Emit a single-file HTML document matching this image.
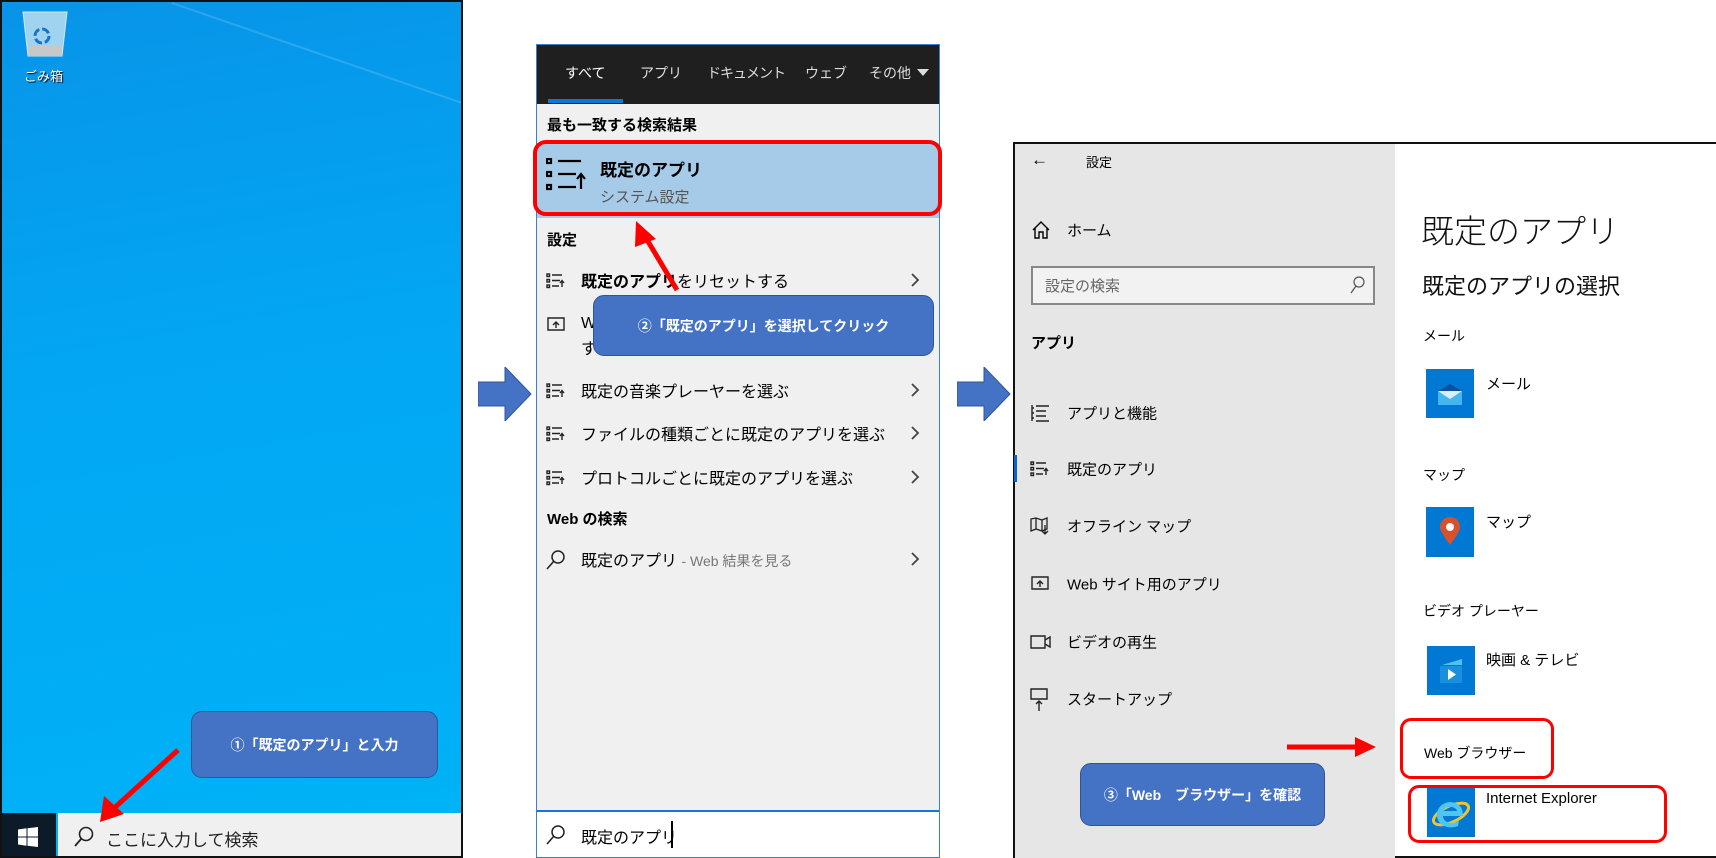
<!DOCTYPE html>
<html><head><meta charset="utf-8"><style>
*{margin:0;padding:0;box-sizing:border-box}
body{width:1716px;height:858px;position:relative;background:#fff;overflow:hidden;font-family:"Liberation Sans","Noto Sans CJK JP",sans-serif;color:#000}
.a{position:absolute;white-space:nowrap}
.call{position:absolute;background:#4472c4;border:1px solid #2f5597;border-radius:11px;color:#fff;font-weight:bold;font-size:14px;display:flex;align-items:center;justify-content:center}
.row{position:absolute;left:581px;font-size:16px;transform:translateY(-50%)}
.chev{position:absolute;left:910px;width:10px;height:16px;transform:translateY(-50%)}
.si{position:absolute;font-size:15px;left:1067px;transform:translateY(-50%);color:#000}
</style></head><body>

<svg width="0" height="0" style="position:absolute"><defs>
<g id="li"><g fill="none" stroke="#222" stroke-width="1.4"><rect x="1" y="1" width="2.5" height="2.5"/><rect x="1" y="6.5" width="2.5" height="2.5"/><rect x="1" y="12" width="2.5" height="2.5"/><path d="M6 2H16M6 7.5H14M6 13H13M16 14V8M14 10L16 7.5L18 10"/></g></g>
<path id="cv" d="M2 2L8 8L2 14" fill="none" stroke="#444" stroke-width="1.8"/>
</defs></svg>

<!-- Desktop -->
<div class="a" style="left:0;top:0;width:463px;height:858px;border:2px solid #111;background:linear-gradient(170deg,#0894e8 0%,#03a6f3 40%,#00b3f7 100%);overflow:hidden">
  <div class="a" style="left:170px;top:0;width:400px;height:2px;background:rgba(255,255,255,.15);transform:rotate(19deg);transform-origin:0 0"></div>
  <svg class="a" style="left:18px;top:4px" width="50" height="54" viewBox="0 0 50 54"><path d="M3 6 L47 6 L42 50 L8 50 Z" fill="#9fd3f0" stroke="#cfe9f7"/><rect x="8" y="40" width="34" height="10" fill="#c8c8c8"/><circle cx="22" cy="30" r="7" fill="none" stroke="#1674c8" stroke-width="3" stroke-dasharray="8 3"/></svg>
  <div class="a" style="left:22px;top:64px;color:#fff;font-size:13px;text-shadow:1px 1px 1px #000">ごみ箱</div>
  <div class="a" style="left:0;top:811px;width:54px;height:47px;background:#0d1b28"></div>
  <svg class="a" style="left:16px;top:825px" width="20" height="20" viewBox="0 0 20 20"><path d="M0 2.5L8.5 1.3V9.5H0ZM9.5 1.2L20 0V9.5H9.5ZM0 10.5H8.5V18.7L0 17.5ZM9.5 10.5H20V20L9.5 18.8Z" fill="#fff"/></svg>
  <div class="a" style="left:56px;top:811px;width:406px;height:47px;background:#f0f0f0"></div>
  <svg class="a" style="left:70px;top:823px" width="24" height="24" viewBox="0 0 24 24"><circle cx="14" cy="9" r="6.5" fill="none" stroke="#222" stroke-width="1.6"/><path d="M9.5 13.5L3 21" stroke="#222" stroke-width="1.8"/></svg>
  <div class="a" style="left:104px;top:824px;font-size:17px;color:#222">ここに入力して検索</div>
</div>
<div class="call" style="left:191px;top:711px;width:247px;height:67px">①「既定のアプリ」と入力</div>
<svg class="a" style="left:0;top:0" width="1716" height="858"><path d="M178 750 L112 810" stroke="#f00" stroke-width="5"/><path d="M100 822 L104 796 L124 814 Z" fill="#f00"/></svg>

<!-- arrows -->
<svg class="a" style="left:478px;top:367px" width="54" height="54"><path d="M0 15H27V0L53 27L27 54V39H0Z" fill="#4472c4" stroke="#2f5597"/></svg>
<svg class="a" style="left:957px;top:367px" width="54" height="54"><path d="M0 15H27V0L53 27L27 54V39H0Z" fill="#4472c4" stroke="#2f5597"/></svg>

<!-- Search panel -->
<div class="a" style="left:536px;top:44px;width:404px;height:814px;background:#f0f0f0;border:1px solid #3b7fd0"></div>
<div class="a" style="left:537px;top:45px;width:402px;height:59px;background:#1f1f1f"></div>
<div class="a" style="left:548px;top:99px;width:75px;height:4px;background:#0a78d7"></div>
<div class="a" style="left:565px;top:63px;color:#fff;font-size:14px">すべて</div>
<div class="a" style="left:640px;top:63px;color:#ddd;font-size:14px">アプリ</div>
<div class="a" style="left:707px;top:63px;color:#ddd;font-size:14px;letter-spacing:-1px">ドキュメント</div>
<div class="a" style="left:805px;top:63px;color:#ddd;font-size:14px">ウェブ</div>
<div class="a" style="left:869px;top:63px;color:#ddd;font-size:14px">その他</div>
<svg class="a" style="left:917px;top:69px" width="12" height="8"><path d="M0 0H12L6 7Z" fill="#ddd"/></svg>
<div class="a" style="left:547px;top:114px;font-size:15px;font-weight:bold">最も一致する検索結果</div>
<div class="a" style="left:537px;top:143px;width:402px;height:75px;background:#a6cbe8"></div>
<div class="a" style="left:533px;top:140px;width:409px;height:76px;border:4px solid #f00;border-radius:13px"></div>
<svg class="a" style="left:546px;top:158px" width="40" height="34" viewBox="0 0 40 34"><g fill="none" stroke="#000" stroke-width="2.2"><rect x="1" y="1" width="4" height="4"/><rect x="1" y="14" width="4" height="4"/><rect x="1" y="27" width="4" height="4"/><path d="M12 3H35M12 16H30M12 29H30M35 31V17M31 21L35 16L39 21"/></g></svg>
<div class="a" style="left:600px;top:156px;font-size:17px;font-weight:bold">既定のアプリ</div>
<div class="a" style="left:600px;top:186px;font-size:15px;color:#555">システム設定</div>
<div class="a" style="left:547px;top:229px;font-size:15px;font-weight:bold">設定</div>

<svg class="a" style="left:546px;top:273px" width="20" height="16"><use href="#li"/></svg>
<div class="row" style="top:280px"><b>既定のアプリ</b>をリセットする</div><svg class="chev" style="top:280px"><use href="#cv"/></svg>
<svg class="a" style="left:547px;top:317px" width="18" height="16"><path d="M1 1H17V13H1ZM9 11V5M6 8L9 5L12 8" fill="none" stroke="#222" stroke-width="1.4"/></svg>
<div class="row" style="top:324px">W</div><div class="row" style="top:347px">す</div>
<svg class="a" style="left:546px;top:383px" width="20" height="16"><use href="#li"/></svg>
<div class="row" style="top:390px">既定の音楽プレーヤーを選ぶ</div><svg class="chev" style="top:390px"><use href="#cv"/></svg>
<svg class="a" style="left:546px;top:426px" width="20" height="16"><use href="#li"/></svg>
<div class="row" style="top:433px">ファイルの種類ごとに既定のアプリを選ぶ</div><svg class="chev" style="top:433px"><use href="#cv"/></svg>
<svg class="a" style="left:546px;top:470px" width="20" height="16"><use href="#li"/></svg>
<div class="row" style="top:477px">プロトコルごとに既定のアプリを選ぶ</div><svg class="chev" style="top:477px"><use href="#cv"/></svg>
<div class="a" style="left:547px;top:508px;font-size:15px;font-weight:bold">Web の検索</div>
<svg class="a" style="left:545px;top:549px" width="22" height="22" viewBox="0 0 22 22"><circle cx="13" cy="8" r="6" fill="none" stroke="#222" stroke-width="1.5"/><path d="M9 12L2 20" stroke="#222" stroke-width="1.6"/></svg>
<div class="row" style="top:559px">既定のアプリ <span style="color:#777;font-size:14px">- Web 結果を見る</span></div><svg class="chev" style="top:559px"><use href="#cv"/></svg>
<div class="a" style="left:537px;top:810px;width:402px;height:47px;background:#fff;border-top:2px solid #1a73d6"></div>
<svg class="a" style="left:545px;top:824px" width="22" height="22" viewBox="0 0 22 22"><circle cx="13" cy="8" r="6" fill="none" stroke="#222" stroke-width="1.5"/><path d="M9 12L2 20" stroke="#222" stroke-width="1.6"/></svg>
<div class="a" style="left:581px;top:824px;font-size:16px">既定のアプリ</div>
<div class="a" style="left:671px;top:821px;width:2px;height:27px;background:#000"></div>

<div class="call" style="left:593px;top:295px;width:341px;height:61px">②「既定のアプリ」を選択してクリック</div>
<svg class="a" style="left:0;top:0" width="1716" height="858"><path d="M677 290 L646 238" stroke="#f00" stroke-width="5"/><path d="M636 221 L656 239 L635 247 Z" fill="#f00"/></svg>

<!-- Settings -->
<div class="a" style="left:1013px;top:142px;width:703px;height:716px;border:2px solid #111;border-right:none;background:#fff"></div>
<div class="a" style="left:1015px;top:144px;width:380px;height:714px;background:#e6e6e6"></div>
<div class="a" style="left:1031px;top:150px;font-size:17px">&#8592;</div>
<div class="a" style="left:1086px;top:152px;font-size:13px">設定</div>
<svg class="a" style="left:1032px;top:221px" width="18" height="18" viewBox="0 0 18 18"><path d="M1 9L9 1L17 9M3 7V17H7V11H11V17H15V7" fill="none" stroke="#000" stroke-width="1.4"/></svg>
<div class="si" style="top:230px">ホーム</div>
<div class="a" style="left:1031px;top:266px;width:344px;height:39px;border:2px solid #888;background:#f2f2f2"></div>
<div class="a" style="left:1045px;top:275px;font-size:15px;color:#666">設定の検索</div>
<svg class="a" style="left:1349px;top:276px" width="16" height="18" viewBox="0 0 16 18"><circle cx="10" cy="6" r="5" fill="none" stroke="#555" stroke-width="1.2"/><path d="M7 10L2 17" stroke="#555" stroke-width="1.3"/></svg>
<div class="a" style="left:1031px;top:332px;font-size:15px;font-weight:bold">アプリ</div>
<svg class="a" style="left:1031px;top:404px" width="20" height="18"><g fill="none" stroke="#222" stroke-width="1.4"><path d="M1 1V17M5 2H18M5 7H15M5 12H15M5 17H18M1 4H3M1 9H3M1 14H3"/></g></svg>
<div class="si" style="top:413px">アプリと機能</div>
<div class="a" style="left:1014px;top:455px;width:3px;height:27px;background:#0a64c8"></div>
<svg class="a" style="left:1030px;top:461px" width="20" height="16"><use href="#li"/></svg>
<div class="si" style="top:469px">既定のアプリ</div>
<svg class="a" style="left:1030px;top:517px" width="20" height="18"><path d="M1 2L6 1L12 3L17 1V12L12 14L6 12L1 14Z M6 1V12M12 3V14M15 8V16M12 14L15 17L18 14" fill="none" stroke="#222" stroke-width="1.3"/></svg>
<div class="si" style="top:526px">オフライン マップ</div>
<svg class="a" style="left:1031px;top:576px" width="18" height="16"><path d="M1 1H17V13H1ZM9 11V5M6 8L9 5L12 8" fill="none" stroke="#222" stroke-width="1.4"/></svg>
<div class="si" style="top:584px">Web サイト用のアプリ</div>
<svg class="a" style="left:1030px;top:634px" width="22" height="16"><path d="M1 2H15V14H1ZM15 6L20 3V13L15 10" fill="none" stroke="#222" stroke-width="1.4"/></svg>
<div class="si" style="top:642px">ビデオの再生</div>
<svg class="a" style="left:1030px;top:688px" width="20" height="24"><path d="M1 1H17V11H1ZM9 23V13M6 16L9 13L12 16" fill="none" stroke="#222" stroke-width="1.4"/></svg>
<div class="si" style="top:699px">スタートアップ</div>

<div class="a" style="left:1421px;top:205px;font-size:33px;font-weight:300;color:#111">既定のアプリ</div>
<div class="a" style="left:1422px;top:269px;font-size:22px;color:#111">既定のアプリの選択</div>
<div class="a" style="left:1423px;top:326px;font-size:14px">メール</div>
<div class="a" style="left:1426px;top:369px;width:48px;height:49px;background:#0078d4"></div>
<svg class="a" style="left:1436px;top:383px" width="28" height="24"><path d="M2 8L14 1L26 8V22H2Z" fill="#0a4fa0"/><path d="M2 8H26V22H2Z" fill="#45b5f0"/><path d="M2 8L14 16L26 8" fill="#d8f0ff"/></svg>
<div class="a" style="left:1486px;top:373px;font-size:15px">メール</div>
<div class="a" style="left:1423px;top:465px;font-size:14px">マップ</div>
<div class="a" style="left:1426px;top:507px;width:48px;height:50px;background:#0078d4"></div>
<svg class="a" style="left:1438px;top:516px" width="24" height="30"><path d="M12 29C4 18 2 14 2 11A10 10 0 0 1 22 11C22 14 20 18 12 29Z" fill="#d9512c"/><circle cx="12" cy="11" r="4" fill="#fff"/></svg>
<div class="a" style="left:1486px;top:511px;font-size:15px">マップ</div>
<div class="a" style="left:1423px;top:601px;font-size:14px">ビデオ プレーヤー</div>
<div class="a" style="left:1427px;top:646px;width:48px;height:49px;background:#0078d4"></div>
<svg class="a" style="left:1438px;top:657px" width="28" height="28"><path d="M4 8L24 2V8Z" fill="#50c0f0"/><rect x="2" y="9" width="22" height="17" fill="#1a90dc"/><path d="M10 12L18 17.5L10 23Z" fill="#fff"/></svg>
<div class="a" style="left:1486px;top:649px;font-size:15px">映画 &amp; テレビ</div>
<div class="a" style="left:1400px;top:718px;width:154px;height:61px;border:3px solid #f00;border-radius:11px"></div>
<div class="a" style="left:1424px;top:743px;font-size:14px">Web ブラウザー</div>
<div class="a" style="left:1427px;top:786px;width:48px;height:51px;background:#0078d4"></div>
<svg class="a" style="left:1429px;top:790px" width="44" height="44" viewBox="0 0 44 44"><ellipse cx="22" cy="24" rx="19" ry="8" fill="none" stroke="#f2c230" stroke-width="3" transform="rotate(-25 22 24)"/><path d="M30 26H14C14 32 22 35 30 31L29 36C19 40 8 35 8 25C8 15 18 10 26 13C32 15 34 20 34 26ZM14 21H28C27 16 16 15 14 21Z" fill="#4cc6f5"/></svg>
<div class="a" style="left:1486px;top:790px;font-size:15px">Internet Explorer</div>
<div class="a" style="left:1408px;top:785px;width:259px;height:58px;border:3px solid #f00;border-radius:11px"></div>
<svg class="a" style="left:0;top:0" width="1716" height="858"><path d="M1287 747H1357" stroke="#f00" stroke-width="5"/><path d="M1355 737L1376 747L1355 757Z" fill="#f00"/></svg>
<div class="call" style="left:1080px;top:763px;width:245px;height:63px">③「Web　ブラウザー」を確認</div>
</body></html>
